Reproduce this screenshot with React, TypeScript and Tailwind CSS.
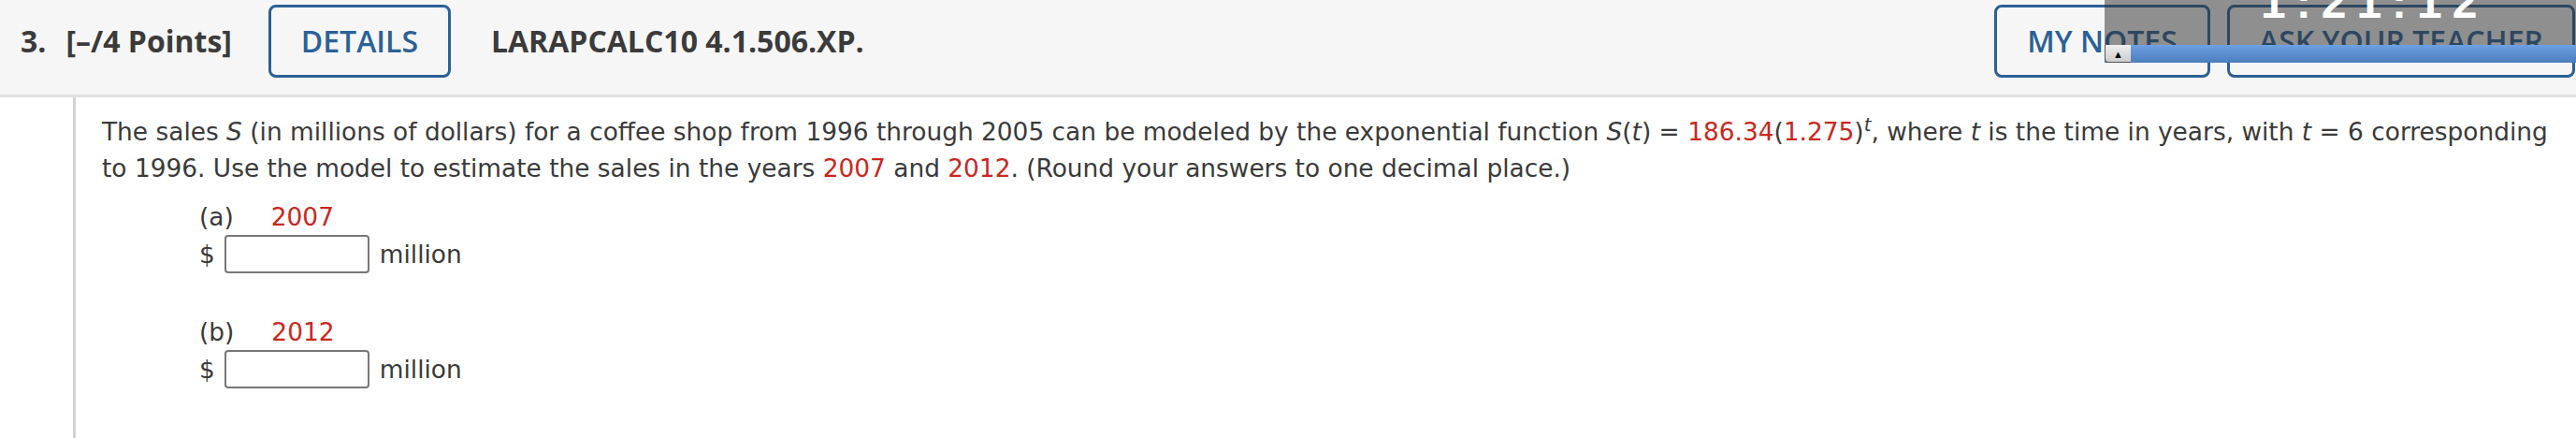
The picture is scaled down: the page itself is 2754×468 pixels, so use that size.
import React from "react";

const red = "text-[#c9281e]";

function Part({ label, year, first }: { label: string; year: string; first?: boolean }) {
  return (
    <div className={first ? "mt-[13px]" : "mt-[43px]"}>
      <div>
        <span>{label}</span>
        <span className={`ml-[40px] ${red}`}>{year}</span>
      </div>
      <div className="flex h-[41px] items-center">
        <span>$</span>
        <input
          type="text"
          className="ml-[10px] h-[41px] w-[155px] rounded-[4px] border-2 border-[#777777] bg-white outline-none"
        />
        <span className="ml-[11px]">million</span>
      </div>
    </div>
  );
}

export default function App() {
  return (
    <div className="relative flex h-[468px] w-[2754px] flex-col overflow-hidden bg-white">
      {/* question header */}
      <header className="flex shrink-0 items-center overflow-hidden border-b-[3px] border-[#e1e1e1] bg-[#f6f6f6] pb-[18px] pl-[22px] pt-[5px] font-['Open_Sans',sans-serif] text-[32px] text-[#3b3b3b]">
        <span className="font-bold">3.</span>
        <span className="ml-[21px] font-bold">[–/4 Points]</span>
        <button className="ml-[39px] flex h-[78px] w-[195px] shrink-0 items-center justify-center rounded-[8px] border-[3px] border-[#2b6196] font-semibold text-[#2b6196]">
          DETAILS
        </button>
        <span className="ml-[43px] font-bold">LARAPCALC10 4.1.506.XP.</span>
        <div className="flex-1" />
        <button className="flex h-[78px] w-[231px] shrink-0 items-center justify-center rounded-[8px] border-[3px] border-[#2b6196] font-semibold text-[#2b6196]">
          MY NOTES
        </button>
        <button className="ml-[18px] mr-[1px] flex h-[78px] w-[372px] shrink-0 items-center justify-center rounded-[8px] border-[3px] border-[#2b6196] font-semibold text-[#2b6196]">
          ASK YOUR TEACHER
        </button>
      </header>

      {/* recording timer overlay */}
      <div className="absolute left-[2250px] top-0 w-[504px]">
        <div className="relative h-[48px] overflow-hidden bg-[rgba(48,48,48,0.52)]">
          <div className="absolute left-[167px] top-[-21px] font-['Liberation_Sans',sans-serif] text-[48px] font-bold leading-[48px] tracking-[11px] text-white">
            1:21:12
          </div>
        </div>
        <div className="flex h-[19px] bg-gradient-to-b from-[#6da1e4] to-[#4c7dbd]">
          <div className="flex w-[28px] items-center justify-center rounded-bl-[4px] border-b border-l border-[#555] bg-gradient-to-b from-[#f0f0f0] to-[#cccccc] text-[11px] leading-none text-black">
            ▲
          </div>
        </div>
      </div>

      {/* question body */}
      <div className="ml-[78px] flex-1 border-l-[3px] border-[#d2d2d2] pl-[28px] pr-[8px] pt-[17px] font-['DejaVu_Sans',Verdana,sans-serif] text-[26.4px] leading-[39px] text-[#3a3a3a]">
        <p>
          The sales <i>S</i> (in millions of dollars) for a coffee shop from 1996 through 2005 can be modeled by
          the exponential function <i>S</i>(<i>t</i>) = <span className={red}>186.34</span>(
          <span className={red}>1.275</span>)<sup className="italic">t</sup>, where <i>t</i> is the time in years,
          with <i>t</i> = 6 corresponding to 1996. Use the model to estimate the sales in the years{" "}
          <span className={red}>2007</span> and <span className={red}>2012</span>. (Round your answers to one
          decimal place.)
        </p>
        <div className="ml-[104px]">
          <Part label="(a)" year="2007" first />
          <Part label="(b)" year="2012" />
        </div>
      </div>
    </div>
  );
}
